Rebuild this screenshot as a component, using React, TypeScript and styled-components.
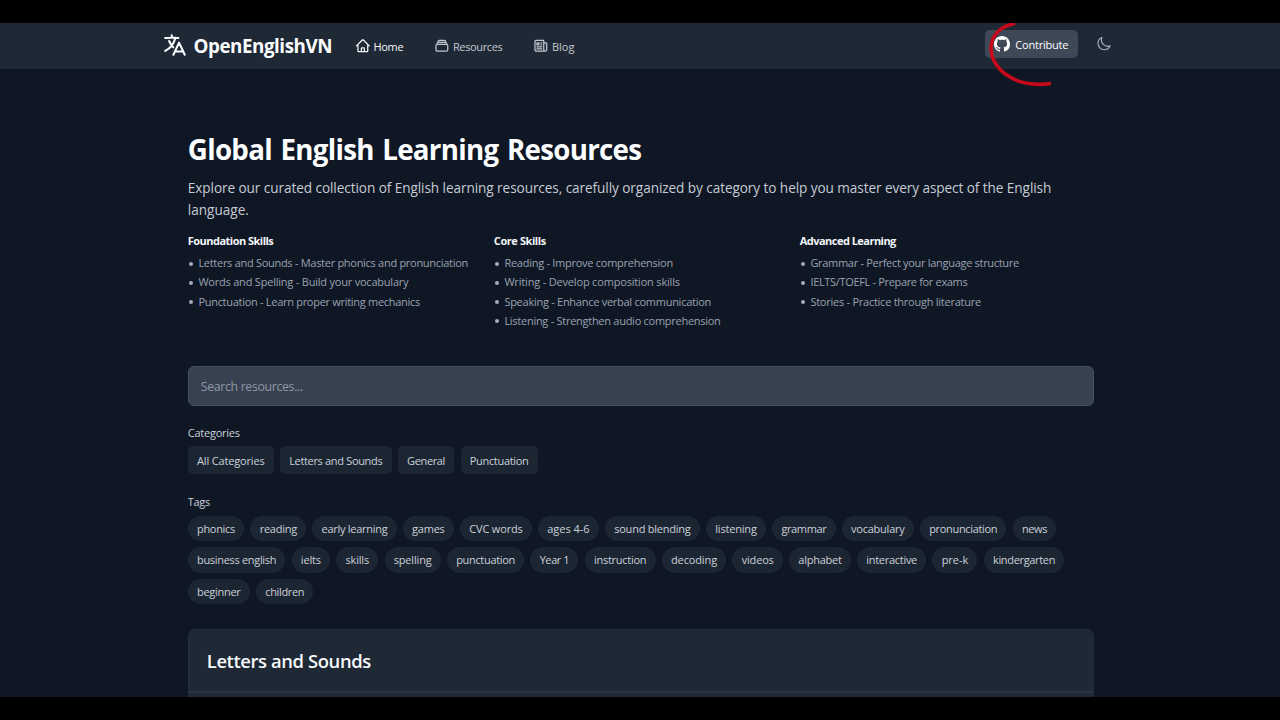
import React, { useLayoutEffect, useRef, useState } from 'react';
import styled, { createGlobalStyle } from 'styled-components';
import {
  HiOutlineHome,
  HiOutlineLanguage,
  HiOutlineMoon,
  HiOutlineNewspaper,
  HiOutlineRectangleStack,
} from 'react-icons/hi2';

const GlobalStyle = createGlobalStyle`
  * { box-sizing: border-box; }
  body {
    margin: 0;
    background: #000;
    font-family: "Open Sans", "Noto Sans", sans-serif;
    overflow: hidden;
  }
  h1, h2, h3, p, ul { margin: 0; padding: 0; font-weight: inherit; }
  ul { list-style: none; }
  button { font: inherit; color: inherit; border: 0; background: none; padding: 0; }
`;

const Frame = styled.div`
  width: 1280px;
  height: 720px;
  padding: 23px 0;
  background: #000;
`;

const Screen = styled.div`
  position: relative;
  height: 674px;
  overflow: hidden;
  background: #0f1725;
`;

const NavBar = styled.header`
  display: flex;
  align-items: center;
  height: 46px;
  padding: 0 168px 0 162px;
  background: #1f2835;
`;

const Brand = styled.a`
  display: flex;
  align-items: center;
  gap: 5.5px;
  width: 192.7px;
  color: #fbfdff;
  font-size: 18.8px;
  line-height: 26px;
  font-weight: 700;
  svg { flex: none; margin-top: -3px; stroke-width: 1.9; }
`;

const NavLink = styled.a<{ $active?: boolean; $width: number }>`
  display: flex;
  align-items: center;
  gap: 3px;
  width: ${(p) => p.$width}px;
  padding-top: 1px;
  color: ${(p) => (p.$active ? '#f6f8fb' : '#c3c9d2')};
  font-size: 11px;
  line-height: 16px;
  svg { flex: none; stroke-width: 1.9; margin-top: -1px; }
`;

const NavActions = styled.div`
  display: flex;
  align-items: center;
  gap: 18.5px;
  margin: -4px 0 0 auto;
  color: #a3abb8;
  > svg { stroke-width: 1.8; }
`;

const ContributeButton = styled.button`
  display: flex;
  align-items: center;
  gap: 5.5px;
  height: 28px;
  width: 93px;
  padding-left: 9px;
  border-radius: 5px;
  background: #3e4856;
  color: #fff;
  font-size: 11px;
`;

const Arc = styled.svg`
  position: absolute;
  left: 980px;
  top: 0;
  pointer-events: none;
`;

const Main = styled.main`
  width: 906px;
  margin-left: 187.8px;
  padding-top: 62px;
`;

const Title = styled.h1`
  height: 36px;
  color: #fdfeff;
  font-size: 27.7px;
  line-height: 36px;
  font-weight: 700;
  word-spacing: 2px;
`;

const Lead = styled.p`
  margin-top: 10px;
  color: #c6cbd3;
  font-size: 13.6px;
  line-height: 22px;
`;

const SkillGrid = styled.section`
  display: grid;
  grid-template-columns: repeat(3, 1fr);
  column-gap: 0;
  width: 918px;
  margin-top: 12.4px;
`;

const SkillTitle = styled.h3`
  color: #f4f6f9;
  font-size: 11px;
  line-height: 16px;
  font-weight: 700;
  margin-bottom: 3.7px;
`;

const SkillItem = styled.li`
  display: flex;
  align-items: center;
  height: 19.25px;
  color: #9aa2af;
  font-size: 11px;
  line-height: 19px;
  &::before {
    content: '';
    width: 4px;
    height: 4px;
    margin: 2px 5.6px 0 1px;
    border-radius: 50%;
    background: #a6adb9;
  }
`;

const SearchBox = styled.div`
  display: flex;
  align-items: center;
  height: 40px;
  margin-top: 35.9px;
  padding: 2px 12px 0;
  border: 1px solid #465160;
  border-radius: 6px;
  background: #37414f;
  color: #8e97a5;
  font-size: 12.4px;
`;

const FilterLabel = styled.div<{ $top: number }>`
  height: 16px;
  margin-top: ${(p) => p.$top}px;
  color: #cbd0d8;
  font-size: 11px;
  line-height: 16px;
`;

const ChipRow = styled.div`
  display: flex;
  gap: 6.3px;
`;

const Chip = styled.button<{ $pill?: boolean }>`
  display: flex;
  flex: none;
  justify-content: center;
  align-items: center;
  height: ${(p) => (p.$pill ? 25.4 : 28)}px;
  padding: 1px 9.2px 0;
  border-radius: ${(p) => (p.$pill ? 13 : 5)}px;
  background: #1c2633;
  color: #cbd0d8;
  font-size: 11px;
  line-height: 16px;
`;

const CategoryRow = styled(ChipRow)`
  margin-top: 5.5px;
`;

const TagList = styled.div`
  display: flex;
  flex-direction: column;
  gap: 6.1px;
  margin-top: 5.8px;
`;

const Card = styled.section`
  height: 120px;
  margin-top: 25.2px;
  border: 1px solid #242d3a;
  border-radius: 7px;
  background: #202835;
`;

const CardHeader = styled.div`
  height: 63px;
  padding: 18px 18px 0;
  border-bottom: 2px solid #2b3442;
  border-radius: 6px 6px 0 0;
  background: #1f2835;
  color: #f6f9fb;
  font-size: 18.4px;
  line-height: 26px;
  font-weight: 600;
`;

const FitLabel = styled.span`
  display: inline-block;
  white-space: nowrap;
`;

/* Tracks a label so that it occupies the given width. */
function Fit({ text, width }: { text: string; width: number }) {
  const ref = useRef<HTMLSpanElement>(null);
  const [spacing, setSpacing] = useState(0);
  useLayoutEffect(() => {
    const el = ref.current;
    if (!el) return;
    el.style.letterSpacing = '0px';
    const natural = el.getBoundingClientRect().width;
    const next = (width - natural) / text.length;
    el.style.letterSpacing = `${next}px`;
    setSpacing(next);
  }, [text, width]);
  return (
    <FitLabel ref={ref} style={{ letterSpacing: spacing }}>
      {text}
    </FitLabel>
  );
}

function GithubMark() {
  return (
    <svg width="16" height="16" viewBox="0 0 16 16" fill="currentColor">
      <path d="M8 0C3.58 0 0 3.58 0 8c0 3.54 2.29 6.53 5.47 7.59.4.07.55-.17.55-.38 0-.19-.01-.82-.01-1.49-2.01.37-2.53-.49-2.69-.94-.09-.23-.48-.94-.82-1.13-.28-.15-.68-.52-.01-.53.63-.01 1.08.58 1.23.82.72 1.21 1.87.87 2.33.66.07-.52.28-.87.51-1.07-1.78-.2-3.64-.89-3.64-3.95 0-.87.31-1.59.82-2.15-.08-.2-.36-1.02.08-2.12 0 0 .67-.21 2.2.82.64-.18 1.32-.27 2-.27.68 0 1.36.09 2 .27 1.53-1.04 2.2-.82 2.2-.82.44 1.1.16 1.92.08 2.12.51.56.82 1.27.82 2.15 0 3.07-1.87 3.75-3.65 3.95.29.25.54.73.54 1.48 0 1.07-.01 1.93-.01 2.2 0 .21.15.46.55.38A8.013 8.013 0 0016 8c0-4.42-3.58-8-8-8z" />
    </svg>
  );
}

type Label = [string, number];

const skills: { title: Label; items: Label[] }[] = [
  {
    title: ['Foundation Skills', 85.5],
    items: [
      ['Letters and Sounds - Master phonics and pronunciation', 269.6],
      ['Words and Spelling - Build your vocabulary', 210],
      ['Punctuation - Learn proper writing mechanics', 221.6],
    ],
  },
  {
    title: ['Core Skills', 52],
    items: [
      ['Reading - Improve comprehension', 168.5],
      ['Writing - Develop composition skills', 175.5],
      ['Speaking - Enhance verbal communication', 206.6],
      ['Listening - Strengthen audio comprehension', 216.2],
    ],
  },
  {
    title: ['Advanced Learning', 96],
    items: [
      ['Grammar - Perfect your language structure', 208.5],
      ['IELTS/TOEFL - Prepare for exams', 157],
      ['Stories - Practice through literature', 170.5],
    ],
  },
];

const categories: Label[] = [
  ['All Categories', 67.5],
  ['Letters and Sounds', 93.2],
  ['General', 38],
  ['Punctuation', 58.8],
];

const tagRows: Label[][] = [
  [
    ['phonics', 38], ['reading', 37.2], ['early learning', 65.8], ['games', 32.6],
    ['CVC words', 53.3], ['ages 4-6', 42.3], ['sound blending', 76.3], ['listening', 41.5],
    ['grammar', 45], ['vocabulary', 53.5], ['pronunciation', 68], ['news', 25.2],
  ],
  [
    ['business english', 79.2], ['ielts', 20], ['skills', 23.5], ['spelling', 37.8],
    ['punctuation', 58.8], ['Year 1', 29.6], ['instruction', 52.4], ['decoding', 46],
    ['videos', 32], ['alphabet', 43.3], ['interactive', 50.7], ['pre-k', 26.6], ['kindergarten', 62.2],
  ],
  [['beginner', 43.6], ['children', 39]],
];

export default function App() {
  return (
    <>
      <GlobalStyle />
      <Frame>
        <Screen>
          <NavBar>
            <Brand>
              <HiOutlineLanguage size={26} />
              <Fit text="OpenEnglishVN" width={138.5} />
            </Brand>
            <NavLink $active $width={79.5}>
              <HiOutlineHome size={15.7} />
              <Fit text="Home" width={30} />
            </NavLink>
            <NavLink $width={99}>
              <HiOutlineRectangleStack size={15.7} />
              <Fit text="Resources" width={49.6} />
            </NavLink>
            <NavLink $width={60}>
              <HiOutlineNewspaper size={15.7} />
              <Fit text="Blog" width={22.5} />
            </NavLink>
            <NavActions>
              <ContributeButton>
                <GithubMark />
                <Fit text="Contribute" width={53} />
              </ContributeButton>
              <HiOutlineMoon size={15.7} />
            </NavActions>
          </NavBar>
          <Main>
            <Title>
              <Fit text="Global English Learning Resources" width={453.5} />
            </Title>
            <Lead>
              <Fit
                text="Explore our curated collection of English learning resources, carefully organized by category to help you master every aspect of the English"
                width={863.5}
              />
              <br />
              <Fit text="language." width={61} />
            </Lead>
            <SkillGrid>
              {skills.map((group) => (
                <div key={group.title[0]}>
                  <SkillTitle>
                    <Fit text={group.title[0]} width={group.title[1]} />
                  </SkillTitle>
                  <ul>
                    {group.items.map(([text, width]) => (
                      <SkillItem key={text}>
                        <Fit text={text} width={width} />
                      </SkillItem>
                    ))}
                  </ul>
                </div>
              ))}
            </SkillGrid>
            <SearchBox>
              <Fit text="Search resources..." width={102} />
            </SearchBox>
            <FilterLabel $top={19}>
              <Fit text="Categories" width={52} />
            </FilterLabel>
            <CategoryRow>
              {categories.map(([text, width]) => (
                <Chip key={text}>
                  <Fit text={text} width={width} />
                </Chip>
              ))}
            </CategoryRow>
            <FilterLabel $top={19.5}>
              <Fit text="Tags" width={22} />
            </FilterLabel>
            <TagList>
              {tagRows.map((row) => (
                <ChipRow key={row[0][0]}>
                  {row.map(([text, width]) => (
                    <Chip $pill key={text}>
                      <Fit text={text} width={width} />
                    </Chip>
                  ))}
                </ChipRow>
              ))}
            </TagList>
            <Card>
              <CardHeader>
                <Fit text="Letters and Sounds" width={164} />
              </CardHeader>
            </Card>
          </Main>
          <Arc width="80" height="70" viewBox="0 0 80 70" fill="none">
            <path
              d="M35 0.5C20 3 11 13 11 26C11 42 30 66 71 60.5"
              stroke="#c60a1b"
              strokeWidth="3.6"
            />
          </Arc>
        </Screen>
      </Frame>
    </>
  );
}
